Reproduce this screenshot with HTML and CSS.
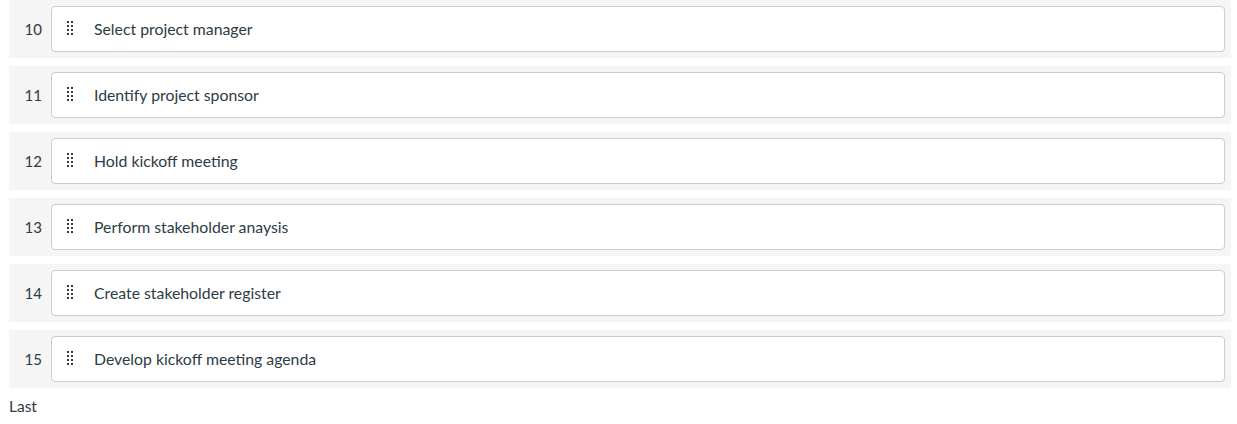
FILE: index.html
```html
<!DOCTYPE html>
<html>
<head>
<meta charset="utf-8">
<link rel="stylesheet" href="styles.css">
</head>
<body>
<div class="list">
  <div class="row"><div class="num">10</div><div class="card"><span class="grip"></span><span class="label">Select project manager</span></div></div>
  <div class="row"><div class="num">11</div><div class="card"><span class="grip"></span><span class="label">Identify project sponsor</span></div></div>
  <div class="row"><div class="num">12</div><div class="card"><span class="grip"></span><span class="label">Hold kickoff meeting</span></div></div>
  <div class="row"><div class="num">13</div><div class="card"><span class="grip"></span><span class="label">Perform stakeholder anaysis</span></div></div>
  <div class="row"><div class="num">14</div><div class="card"><span class="grip"></span><span class="label">Create stakeholder register</span></div></div>
  <div class="row"><div class="num">15</div><div class="card"><span class="grip"></span><span class="label">Develop kickoff meeting agenda</span></div></div>
  <div class="last">Last</div>
</div>
</body>
</html>
```
FILE: styles.css
```css
body {
  margin: 0;
  font-family: Lato, "Liberation Sans", sans-serif;
  color: #2d3b45;
  background: #fff;
}
.list {
  padding-left: 9px;
  width: 1222px;
}
.row {
  display: flex;
  align-items: center;
  height: 58px;
  background: #f5f5f5;
  margin-bottom: 8px;
}
.num {
  width: 33px;
  text-align: right;
  font-size: 15px;
  margin-right: 9px;
}
.card {
  flex: 1;
  margin-right: 6px;
  height: 44px;
  background: #fff;
  border: 1px solid #c7cdd1;
  border-radius: 4px;
  display: flex;
  align-items: center;
}
.grip {
  width: 6px;
  height: 15px;
  margin-left: 15px;
  margin-right: 21px;
  margin-top: -1px;
  background-image: radial-gradient(circle, #2d3b45 1px, transparent 1.3px);
  background-size: 4px 4px;
  background-position: -1px -1px;
}
.label {
  font-size: 15.8px;
  padding-bottom: 2px;
}
.last {
  margin-top: -8px;
  padding-top: 8px;
  font-size: 15.5px;
  line-height: 20px;
}
```
